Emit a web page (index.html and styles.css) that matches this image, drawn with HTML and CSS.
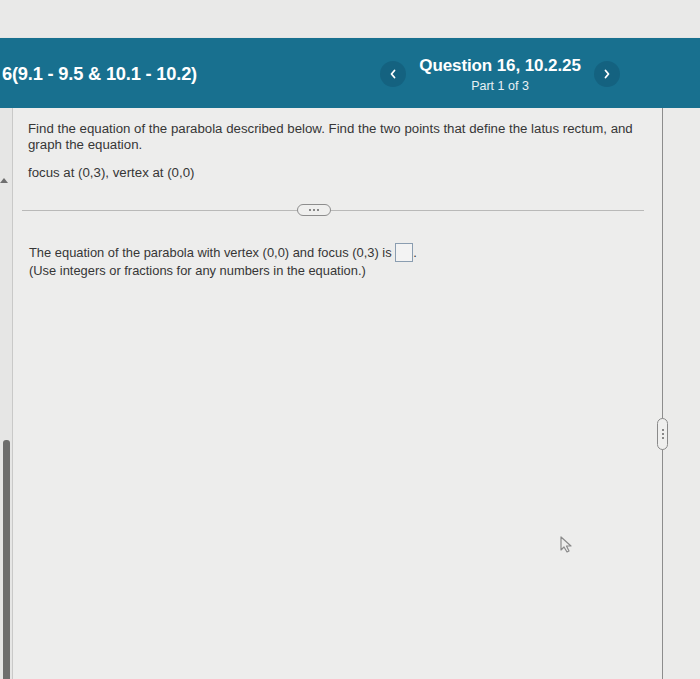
FILE: index.html
```html
<!DOCTYPE html>
<html>
<head>
<meta charset="utf-8">
<link rel="stylesheet" href="styles.css">
</head>
<body>
<div class="top"></div>
<header class="bar">
  <div class="title">6(9.1 - 9.5 &amp; 10.1 - 10.2)</div>
  <div class="nav">
    <button class="circ"><svg width="8" height="10" viewBox="0 0 8 10"><path d="M5.5 1.5 L2.5 5 L5.5 8.5" fill="none" stroke="#fff" stroke-width="1.8" stroke-linecap="round" stroke-linejoin="round"/></svg></button>
    <div class="qinfo">
      <div class="qtitle">Question 16, 10.2.25</div>
      <div class="qpart">Part 1 of 3</div>
    </div>
    <button class="circ next"><svg width="8" height="10" viewBox="0 0 8 10"><path d="M2.5 1.5 L5.5 5 L2.5 8.5" fill="none" stroke="#fff" stroke-width="1.8" stroke-linecap="round" stroke-linejoin="round"/></svg></button>
  </div>
</header>
<main class="page">
  <div class="leftrail">
    <span class="tri"></span>
    <span class="scroll"></span>
  </div>
  <section class="panel">
    <p class="q">Find the equation of the parabola described below. Find the two points that define the latus rectum, and graph the equation.</p>
    <p class="given">focus at (0,3), vertex at (0,0)</p>
    <div class="divider"><span class="pill"><i></i><i></i><i></i></span></div>
    <p class="ans">The equation of the parabola with vertex (0,0) and focus (0,3) is <span class="box"></span>.<br>(Use integers or fractions for any numbers in the equation.)</p>
    <svg class="cursor" width="14" height="18" viewBox="0 0 14 18"><path d="M2 1 L2 14 L5 11 L8 16 L10 15 L7.5 10 L12 10 Z" fill="none" stroke="#8a8a8a" stroke-width="1.2" stroke-linejoin="round"/></svg>
  </section>
  <div class="rightcol">
    <span class="vpill"><i></i><i></i><i></i></span>
  </div>
</main>
</body>
</html>
```

FILE: styles.css
```css
html, body {
  margin: 0;
  padding: 0;
  height: 100%;
  overflow: hidden;
}
body {
  background: #ebebea;
  font-family: "Liberation Sans", Arial, sans-serif;
  width: 700px;
  height: 679px;
}
.top {
  height: 38px;
  background: #e9e9e8;
}
.bar {
  height: 70px;
  background: #18708f;
  display: flex;
  align-items: center;
  color: #fff;
  box-shadow: 0 1px 2px rgba(0,0,0,0.25);
}
.title {
  font-weight: bold;
  font-size: 18.3px;
  margin-left: 2px;
  width: 378px;
  margin-top: 2px;
  letter-spacing: -0.2px;
}
.nav {
  display: flex;
  align-items: center;
}
.circ {
  width: 26px;
  height: 26px;
  border-radius: 50%;
  background: #146280;
  border: none;
  padding: 0;
  display: flex;
  align-items: center;
  justify-content: center;
  margin-top: 2px;
}
.qinfo {
  width: 174px;
  text-align: center;
  margin: 2px 7px 0 7px;
}
.qtitle {
  font-weight: bold;
  font-size: 17px;
  letter-spacing: -0.1px;
}
.qpart {
  font-size: 12.5px;
  margin-top: 3px;
  color: #e8f1f5;
}
.page {
  display: flex;
  height: 571px;
}
.leftrail {
  width: 12px;
  border-right: 1px solid #c9c9c8;
  position: relative;
  background: #e6e6e5;
}
.tri {
  position: absolute;
  left: 0;
  top: 70px;
  width: 0;
  height: 0;
  border-left: 4px solid transparent;
  border-right: 4px solid transparent;
  border-bottom: 5px solid #6f6f6f;
}
.scroll {
  position: absolute;
  left: 3px;
  top: 332px;
  bottom: 0;
  width: 7px;
  border-radius: 3px 3px 0 0;
  background: #6e6e6d;
}
.panel {
  width: 649px;
  position: relative;
  background: #ededec;
  color: #363636;
  font-size: 13.25px;
}
.q {
  margin: 13px 0 0 15px;
  line-height: 16px;
  width: 625px;
}
.given {
  margin: 12px 0 0 15px;
  line-height: 16px;
}
.divider {
  margin: 29px 0 0 9px;
  width: 622px;
  height: 1px;
  background: #b9b9b8;
  position: relative;
}
.pill {
  position: absolute;
  left: 275px;
  top: -6px;
  width: 32px;
  height: 10px;
  border: 1px solid #8d8d8d;
  border-radius: 6px;
  background: #efefee;
  display: flex;
  align-items: center;
  justify-content: center;
  gap: 2px;
}
.pill i, .vpill i {
  display: block;
  width: 2px;
  height: 2px;
  background: #666;
  border-radius: 50%;
}
.ans {
  margin: 32px 0 0 16px;
  line-height: 18px;
  font-size: 12.9px;
}
.box {
  display: inline-block;
  width: 16px;
  height: 17px;
  border: 1px solid #8a9db0;
  vertical-align: -5px;
  background: #f3f3f3;
}
.cursor {
  position: absolute;
  left: 546px;
  top: 428px;
}
.rightcol {
  flex: 1;
  border-left: 1px solid #8d8d8d;
  position: relative;
  background: #ebebea;
}
.vpill {
  position: absolute;
  left: -6px;
  top: 310px;
  width: 9px;
  height: 30px;
  border: 1px solid #8a8a8a;
  border-radius: 6px;
  background: #efefee;
  display: flex;
  flex-direction: column;
  align-items: center;
  justify-content: center;
  gap: 2px;
}
```
